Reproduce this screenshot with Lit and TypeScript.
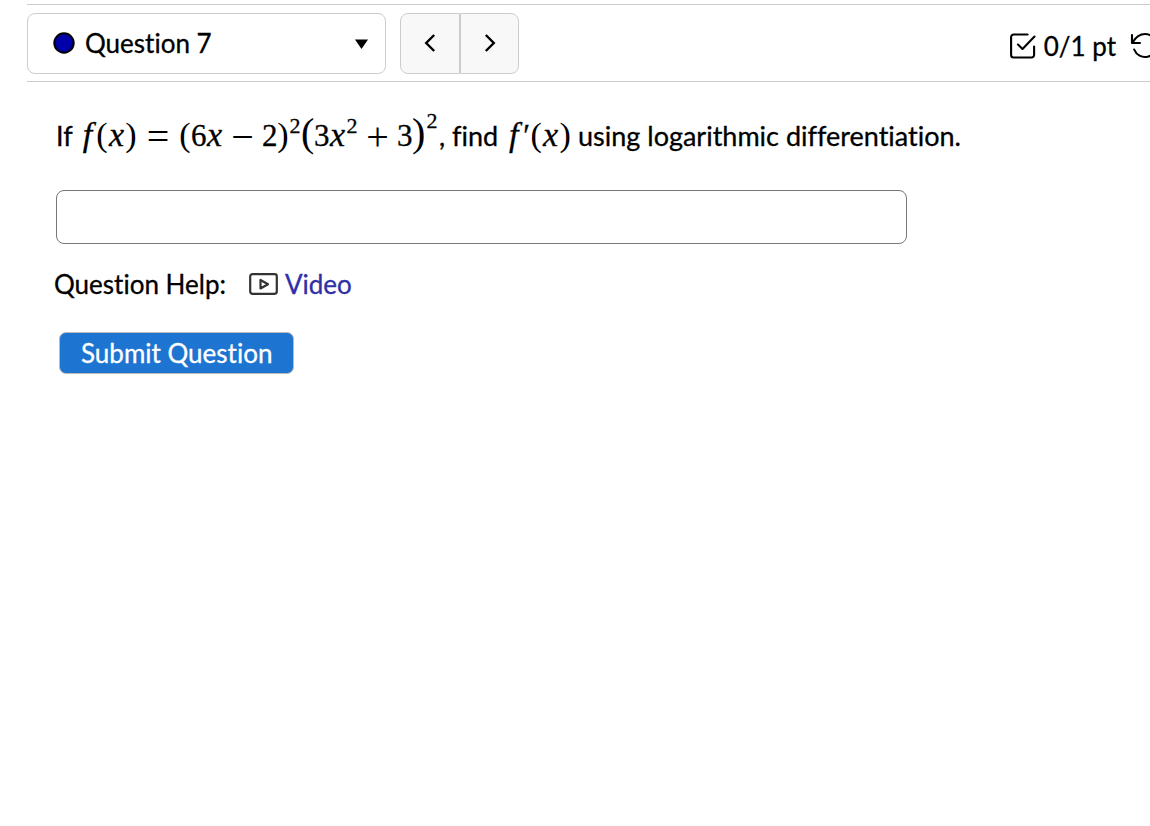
import { LitElement, html, css } from "lit";
import { customElement, state } from "lit/decorators.js";

@customElement("app-root")
export class AppRoot extends LitElement {
  @state() private answer = "";

  static styles = css`
    :host {
      display: block;
      box-sizing: border-box;
      min-height: 100vh;
      padding: 4px 0 0 27px;
      overflow: hidden;
      background: #fff;
      color: #000;
      font-family: Lato, "Trebuchet MS", sans-serif;
      font-size: 26px;
      line-height: 32px;
      font-variant-ligatures: none;
      -webkit-text-stroke: 0.3px currentColor;
    }
    * {
      box-sizing: border-box;
    }
    button,
    input,
    select {
      font: inherit;
      font-variant-ligatures: none;
      color: inherit;
      margin: 0;
    }
    .bar {
      display: flex;
      align-items: center;
      padding: 8px 0 7px;
      border-top: 1px solid #ccc;
      border-bottom: 1px solid #ccc;
    }
    .picker {
      display: grid;
      grid-template-columns: 25px 22px 1fr 16px 16px;
      align-items: center;
      flex: 0 1 359px;
      margin-right: 14px;
    }
    .picker select {
      grid-area: 1 / 1 / 2 / -1;
      appearance: none;
      width: 100%;
      height: 61px;
      padding: 0 40px 2px 57px;
      border: 1px solid #ccc;
      border-radius: 8px;
      background: #fff;
    }
    .dot {
      grid-area: 1 / 2;
      z-index: 1;
      pointer-events: none;
    }
    .caret {
      grid-area: 1 / 4;
      z-index: 1;
      pointer-events: none;
    }
    svg {
      display: block;
      flex: none;
    }
    .pager {
      display: flex;
    }
    .pager button {
      display: grid;
      place-items: center;
      width: 60px;
      height: 61px;
      padding: 0 0 2px;
      border: 1px solid #ccc;
      background: #f8f8f8;
    }
    .pager button:first-child {
      border-radius: 8px 0 0 8px;
    }
    .pager button:last-child {
      width: 59px;
      border-radius: 0 8px 8px 0;
    }
    .status {
      display: flex;
      align-items: center;
      gap: 8px;
      margin: 5px -8px 0 auto;
      white-space: nowrap;
    }
    .score {
      margin-right: 6px;
    }
    .question {
      padding: 24px 27px 0 29px;
    }
    .prompt {
      margin: 0;
      font-size: 27px;
      line-height: 60px;
    }
    .math {
      font-family: "Liberation Serif", serif;
      font-size: 31px;
      line-height: 1;
      white-space: nowrap;
    }
    .math span,
    .math i,
    .math sup {
      display: inline-block;
      text-align: center;
    }
    .math .n {
      width: 15px;
    }
    .math .p {
      width: 12px;
      font-size: 34px;
      -webkit-text-stroke: 0;
    }
    .math .big {
      width: 13px;
      font-size: 40px;
      -webkit-text-stroke: 0;
    }
    .math i {
      width: 17px;
      font-size: 34px;
    }
    .math .op {
      width: 39px;
      font-size: 40px;
      line-height: 0;
      vertical-align: -4px;
      -webkit-text-stroke: 0;
    }
    .math .rel {
      width: 42px;
    }
    .math sup {
      width: 12px;
      font-size: 22px;
      line-height: 0;
      vertical-align: 13px;
    }
    .math .high {
      width: 14px;
      vertical-align: 18px;
    }
    .math .prime {
      width: 8px;
      text-align: right;
    }
    .answer {
      display: block;
      width: 100%;
      max-width: 851px;
      height: 54px;
      margin-top: 24px;
      padding: 0 12px;
      border: 1px solid #777;
      border-radius: 8px;
      background: #fff;
    }
    .help {
      display: flex;
      align-items: center;
      margin: 24px 0 0 -2px;
    }
    .help a {
      display: flex;
      align-items: center;
      gap: 7px;
      margin-left: 23px;
      color: #2f2fa8;
      text-decoration: none;
    }
    .submit {
      height: 42px;
      margin: 32px 0 0 3px;
      padding: 0 21px;
      border: 1px solid #bbb;
      border-radius: 7px;
      background: #1d74d1;
      color: #fff;
      line-height: 40px;
    }
  `;

  render() {
    return html`
      <header class="bar">
        <div class="picker">
          <select aria-label="Select question">
            <option>Question 7</option>
          </select>
          <svg class="dot" width="24" height="26" viewBox="0 0 24 26" aria-hidden="true">
            <circle cx="12" cy="12" r="9.7" fill="#0000a8" stroke="#000" stroke-width="2" />
          </svg>
          <svg class="caret" width="16" height="14" viewBox="0 0 16 14" aria-hidden="true">
            <path d="M1 2.5h13L7.500 12z" />
          </svg>
        </div>
        <nav class="pager" aria-label="Questions">
          <button type="button" aria-label="Previous question">
            <svg width="12" height="18" viewBox="0 0 12 18" fill="none" stroke="#000" stroke-width="2.4">
              <path d="M10.2 1 2.2 9l8 8" />
            </svg>
          </button>
          <button type="button" aria-label="Next question">
            <svg width="12" height="18" viewBox="0 0 12 18" fill="none" stroke="#000" stroke-width="2.4">
              <path d="m1.8 1 8 8-8 8" />
            </svg>
          </button>
        </nav>
        <div class="status">
          <svg width="26" height="26" viewBox="0 0 26 26" fill="none" stroke="#000" stroke-width="2.1" stroke-linecap="round" stroke-linejoin="round" aria-hidden="true">
            <path d="M17 1.5H3A2.5 2.5 0 0 0 .5 4v18A2.5 2.5 0 0 0 3 24.5h18a2.5 2.5 0 0 0 2.5-2.5V13.5" transform="translate(.6 0)" />
            <path d="m8 11.500 4.500 4.500L24.500 3.500" />
          </svg>
          <span class="score">0/1 pt</span>
          <svg width="28" height="28" viewBox="0 0 28 28" fill="none" stroke="#000" stroke-width="2.1" stroke-linecap="round" stroke-linejoin="round" aria-hidden="true">
            <path d="M2 3v8h8" />
            <path d="M2.500 10.500C5.500 5.500 9.500 2 15 2a11.500 11.500 0 1 1-10.800 15.500" />
          </svg>
        </div>
      </header>
      <main class="question">
        <p class="prompt" id="prompt">
          If
          <span class="math"><i>f</i><span class="p">(</span><i>x</i><span class="p">)</span><span class="op rel">=</span><span class="p">(</span><span class="n">6</span><i>x</i><span class="op">−</span><span class="n">2</span><span class="p">)</span><sup>2</sup><span class="big">(</span><span class="n">3</span><i>x</i><sup>2</sup><span class="op">+</span><span class="n">3</span><span class="big">)</span><sup class="high">2</sup></span>, find
          <span class="math"><i>f</i><span class="prime">′</span><span class="p">(</span><i>x</i><span class="p">)</span></span>
          using logarithmic differentiation.
        </p>
        <input
          class="answer"
          type="text"
          aria-labelledby="prompt"
          .value=${this.answer}
          @input=${(e: Event) => (this.answer = (e.target as HTMLInputElement).value)}
        />
        <div class="help">
          <span>Question Help:</span>
          <a href="#video">
            <svg width="29" height="22" viewBox="0 0 29 22" fill="none" stroke="#333" stroke-width="2.2" stroke-linejoin="round" aria-hidden="true">
              <rect x="1.2" y="1.2" width="26.6" height="19.6" rx="2.2" />
              <path d="M11.500 7v8.500l7.500-4.250z" />
            </svg>
            Video
          </a>
        </div>
        <button class="submit" type="button">Submit Question</button>
      </main>
    `;
  }
}
